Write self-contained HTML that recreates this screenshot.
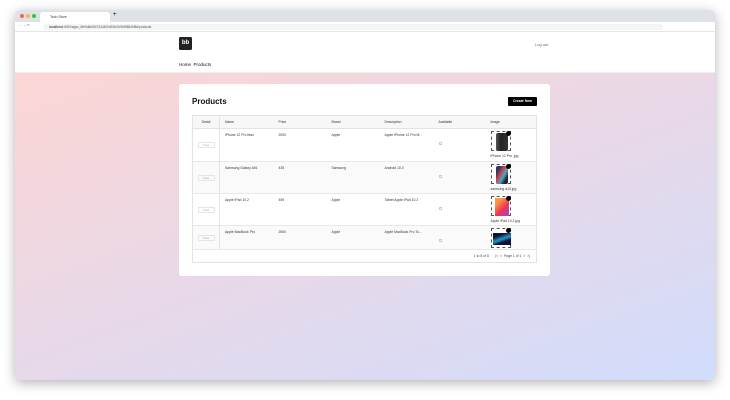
<!DOCTYPE html>
<html><head><style>
*{box-sizing:border-box;margin:0;padding:0}
body{width:730px;height:400px;background:#fff;font-family:"Liberation Sans",sans-serif;position:relative;overflow:hidden}
.win{position:absolute;left:15px;top:10px;width:700px;height:370px;border-radius:5px;overflow:hidden;box-shadow:0 3px 12px rgba(0,0,0,.3)}
.tabs{height:12px;background:#dee1e6;position:relative}
.dot{position:absolute;top:4px;width:4px;height:4px;border-radius:50%}
.tab{position:absolute;left:25px;top:2px;width:70px;height:10px;background:#fff;border-radius:3px 3px 0 0;font-size:3.5px;padding:3px 0 0 10px;color:#333}
.addr{height:10px;background:#fff;border-bottom:1px solid #e5e5e5;position:relative;font-size:3.2px;color:#555}
.url{position:absolute;left:28px;top:2px;width:620px;height:6px;background:#f4f5f6;border-radius:3px;padding:1px 0 0 6px}
.hdr{height:41px;background:#fff;position:relative;border-bottom:1px solid #eee}
.logo{position:absolute;left:164px;top:5px;width:13px;height:13px;background:#222;border-radius:1.5px;color:#fff;font-size:6px;font-weight:bold;text-align:center;line-height:13px}
.nav{position:absolute;left:164px;top:30px;font-size:4.5px;color:#111}
.lo{position:absolute;left:520px;top:10px;font-size:4px;color:#666}
.bg{height:307px;background:linear-gradient(160deg,#fcd6d4 0%,#ead8e6 45%,#d1dcfc 100%);position:relative}
.card{position:absolute;left:164px;top:11px;width:371px;height:192px;background:#fff;border-radius:3px}
h1{position:absolute;left:13px;top:13px;font-size:8px;font-weight:bold;color:#111}
.btn{position:absolute;left:329px;top:13px;width:29px;height:9px;background:#000;color:#fff;font-size:3.5px;text-align:center;line-height:9px;border-radius:1px;font-weight:bold}
table{position:absolute;left:13px;top:31px;width:345px;border-collapse:collapse;font-size:3.4px;color:#333;border:1px solid #e3e3e3}
th{height:13px;background:#f7f7f7;text-align:left;font-weight:normal;padding-left:5px;border-bottom:1px solid #e3e3e3}
td{vertical-align:top;padding:4px 0 0 5px;border-bottom:1px solid #e8e8e8;position:relative}
td.d{width:27px;border-right:1px solid #e3e3e3;padding:0;text-align:center;vertical-align:middle}
.v{display:inline-block;width:17px;height:6px;border:1px solid #e5e5e5;color:#aaa;font-size:3px;line-height:5px}
.cb{display:inline-block;width:3px;height:3px;border:0.5px solid #ccc;margin-top:9px}
.img{width:20px;height:20px;border:0.5px dashed #555;margin-top:-2px;position:relative;background:#fff}
.in{position:absolute;left:4px;top:1px;width:12px;height:18px}
.x{position:absolute;right:-1px;top:-1px;width:5px;height:5px;background:#000;border-radius:50%}
.ft td{height:13px;border:0;text-align:right;padding:4px 6px 0 0;color:#444}
</style></head><body>
<div class="win">
<div class="tabs"><span class="dot" style="left:5px;background:#fe5f57"></span><span class="dot" style="left:11px;background:#febc2e"></span><span class="dot" style="left:17px;background:#28c840"></span><div class="tab">Tech Store</div><span style="position:absolute;left:98px;top:2px;font-size:6px">+</span></div>
<div class="addr"><span style="position:absolute;left:4px;top:1px">← → ↻</span><div class="url"><b>localhost</b>:4000/apps_8fe9dfa0547344400d93641f36f5884bf8d/products</div></div>
<div class="hdr"><div class="logo">bb</div><div class="nav">Home &nbsp;Products</div><div class="lo">Log out</div></div>
<div class="bg"><div class="card"><h1>Products</h1><div class="btn">Create New</div>
<table>
<tr><th style="text-align:center;padding:0;border-right:1px solid #e3e3e3">Detail</th><th style="width:54px">Name</th><th style="width:53px">Price</th><th style="width:53px">Brand</th><th style="width:54px">Description</th><th style="width:52px">Available</th><th>Image</th></tr>
<tr style="height:33px"><td class="d"><span class="v">View</span></td><td>iPhone 12 Pro Max</td><td>2000</td><td>Apple</td><td>Apple iPhone 12 Pro M...</td><td><span class="cb"></span></td><td><div class="img"><div class="in" style="background:linear-gradient(90deg,#555,#222 40%,#333);border-radius:2px"></div><span class="x"></span></div><div style="margin-top:3px">iPhone 12 Pro .jpg</div></td></tr>
<tr style="height:32px;background:#fafafa"><td class="d"><span class="v">View</span></td><td>Samsung Galaxy A51</td><td>435</td><td>Samsung</td><td>Android 10.0</td><td><span class="cb"></span></td><td><div class="img"><div class="in" style="background:linear-gradient(120deg,#336 20%,#c44 40%,#4ac 60%,#223 80%);border-radius:2px"></div><span class="x"></span></div><div style="margin-top:3px">samsung a10.jpg</div></td></tr>
<tr style="height:32px"><td class="d"><span class="v">View</span></td><td>Apple iPad 10.2</td><td>469</td><td>Apple</td><td>Tablet Apple iPad 10.2</td><td><span class="cb"></span></td><td><div class="img"><div class="in" style="left:3px;width:14px;background:linear-gradient(135deg,#f94 20%,#e35 60%,#a4c 90%)"></div><span class="x"></span></div><div style="margin-top:3px">Apple iPad 10.2.jpg</div></td></tr>
<tr style="height:24px;background:#fafafa"><td class="d"><span class="v">View</span></td><td>Apple MacBook Pro</td><td>2500</td><td>Apple</td><td>Apple MacBook Pro To...</td><td><span class="cb"></span></td><td><div class="img"><div class="in" style="left:1px;top:4px;width:18px;height:12px;background:linear-gradient(160deg,#113 25%,#29c 50%,#113 70%)"></div><span class="x"></span></div></td></tr>
<tr class="ft"><td colspan="7">1 to 8 of 8 &nbsp;&nbsp;&nbsp;&nbsp;&nbsp; |&lt; &nbsp;&lt; &nbsp;Page 1 of 1 &nbsp;&gt; &nbsp;&gt;|</td></tr>
</table></div></div>
</div>
</body></html>
